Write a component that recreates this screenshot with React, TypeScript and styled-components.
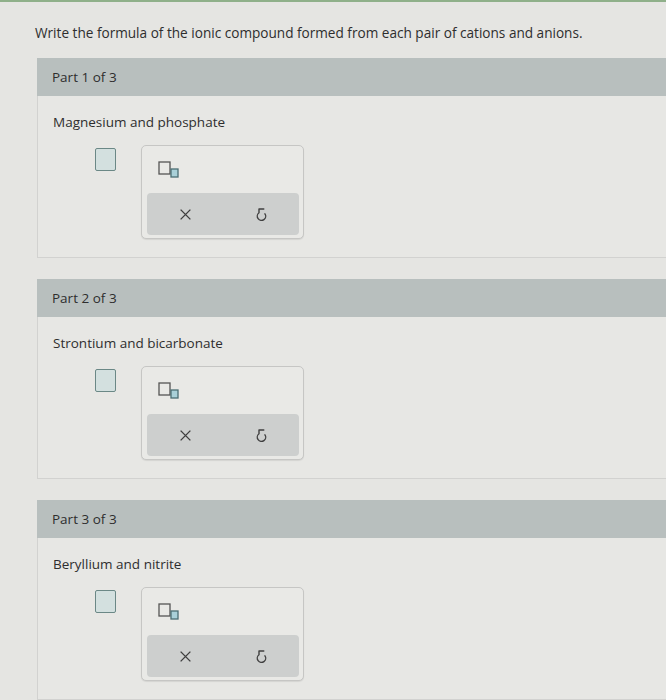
import React from "react";
import styled, { createGlobalStyle } from "styled-components";

const Global = createGlobalStyle`
  html, body { margin: 0; padding: 0; background: #e5e5e2; }
  body { font-family: "Open Sans", "DejaVu Sans", sans-serif; color: #2e2e2e; }
`;

const Page = styled.div`
  width: 666px;
  height: 700px;
  overflow: hidden;
  box-sizing: border-box;
  padding: 22px 0 0 35px;
  background: #e5e5e2;
  border-top: 2px solid #8fb08a;
`;

const Title = styled.div`
  font-size: 13.6px;
  line-height: 18px;
  margin-bottom: 16px;
`;

const Sections = styled.div`
  display: flex;
  flex-direction: column;
  gap: 21px;
  margin-left: 2px;
`;

const Section = styled.section``;

const Header = styled.div`
  height: 38px;
  background: #b8bfbe;
  display: flex;
  align-items: center;
  padding-left: 15px;
  font-size: 13.5px;
`;

const Body = styled.div`
  border-left: 1px solid #d2d2d0;
  border-bottom: 1px solid #d2d2d0;
  padding: 18px 15px 18px;
  background: #e7e7e4;
`;

const Prompt = styled.div`
  font-size: 13.5px;
  line-height: 17px;
  margin-bottom: 14px;
`;

const AnswerRow = styled.div`
  display: flex;
  align-items: flex-start;
  gap: 25px;
  padding-left: 42px;
`;

const AnswerBox = styled.div`
  width: 19px;
  height: 21px;
  margin-top: 3px;
  border: 1.5px solid #6b8886;
  border-radius: 2px;
  background: #d3e0df;
`;

const Palette = styled.div`
  width: 163px;
  box-sizing: border-box;
  border: 1px solid #c6c6c4;
  border-radius: 5px;
  background: #e9e9e6;
  padding: 0 4px 3px 5px;
  box-shadow: 0 1px 1px rgba(0, 0, 0, 0.08);
`;

const PaletteTop = styled.div`
  height: 47px;
  display: flex;
  align-items: flex-start;
  padding: 14px 0 0 11px;
  box-sizing: border-box;
`;

const ButtonBar = styled.div`
  display: flex;
  height: 42px;
  background: #cdcfce;
  border-radius: 4px;
`;

const ToolButton = styled.button`
  flex: 1;
  border: none;
  background: transparent;
  display: flex;
  align-items: center;
  justify-content: center;
  padding: 0;
  color: #444;
`;

const SubscriptIcon = () => (
  <svg width="22" height="20" viewBox="0 0 22 20">
    <rect x="1" y="2" width="11" height="12" fill="none" stroke="#555" strokeWidth="1.3" />
    <rect x="13" y="9" width="7" height="8" fill="#a9d0d8" stroke="#4a6d73" strokeWidth="1.3" />
  </svg>
);

const CloseIcon = () => (
  <svg width="13" height="13" viewBox="0 0 12 12">
    <path d="M1.5 1.5 L10.5 10.5 M10.5 1.5 L1.5 10.5" stroke="#3f3f3f" strokeWidth="1.3" />
  </svg>
);

const UndoIcon = () => (
  <svg width="14" height="16" viewBox="0 0 14 16">
    <path
      d="M9.8 3 H5 V6.8 A4.2 4.2 0 1 0 10.94 7.79"
      fill="none"
      stroke="#3f3f3f"
      strokeWidth="1.4"
      strokeLinecap="round"
      strokeLinejoin="round"
    />
  </svg>
);

const parts = [
  { n: 1, prompt: "Magnesium and phosphate" },
  { n: 2, prompt: "Strontium and bicarbonate" },
  { n: 3, prompt: "Beryllium and nitrite" },
];

export default function App() {
  return (
    <>
      <Global />
      <Page>
        <Title>Write the formula of the ionic compound formed from each pair of cations and anions.</Title>
        <Sections>
          {parts.map((p) => (
            <Section key={p.n}>
              <Header>Part {p.n} of 3</Header>
              <Body>
                <Prompt>{p.prompt}</Prompt>
                <AnswerRow>
                  <AnswerBox />
                  <Palette>
                    <PaletteTop>
                      <SubscriptIcon />
                    </PaletteTop>
                    <ButtonBar>
                      <ToolButton aria-label="clear">
                        <CloseIcon />
                      </ToolButton>
                      <ToolButton aria-label="undo">
                        <UndoIcon />
                      </ToolButton>
                    </ButtonBar>
                  </Palette>
                </AnswerRow>
              </Body>
            </Section>
          ))}
        </Sections>
      </Page>
    </>
  );
}
